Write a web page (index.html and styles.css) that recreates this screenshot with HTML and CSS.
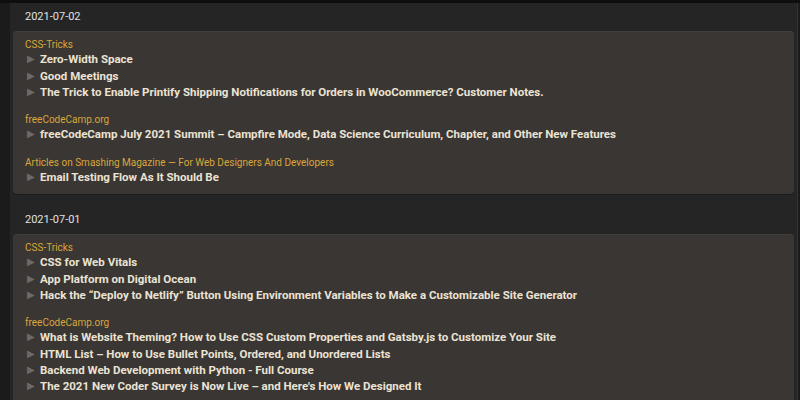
FILE: index.html
```html
<!DOCTYPE html>
<html>
<head>
<meta charset="utf-8">
<link rel="stylesheet" href="styles.css">
</head>
<body>
<div class="page">
  <section class="day">
    <div class="date">2021-07-02</div>
    <div class="card">
      <div class="group">
        <div class="source">CSS-Tricks</div>
        <ul class="items">
          <li><span class="tri">&#9654;</span><span class="title">Zero-Width Space</span></li>
          <li><span class="tri">&#9654;</span><span class="title">Good Meetings</span></li>
          <li><span class="tri">&#9654;</span><span class="title">The Trick to Enable Printify Shipping Notifications for Orders in WooCommerce? Customer Notes.</span></li>
        </ul>
      </div>
      <div class="group">
        <div class="source">freeCodeCamp.org</div>
        <ul class="items">
          <li><span class="tri">&#9654;</span><span class="title">freeCodeCamp July 2021 Summit – Campfire Mode, Data Science Curriculum, Chapter, and Other New Features</span></li>
        </ul>
      </div>
      <div class="group">
        <div class="source">Articles on Smashing Magazine — For Web Designers And Developers</div>
        <ul class="items">
          <li><span class="tri">&#9654;</span><span class="title">Email Testing Flow As It Should Be</span></li>
        </ul>
      </div>
    </div>
  </section>
  <section class="day">
    <div class="date">2021-07-01</div>
    <div class="card">
      <div class="group">
        <div class="source">CSS-Tricks</div>
        <ul class="items">
          <li><span class="tri">&#9654;</span><span class="title">CSS for Web Vitals</span></li>
          <li><span class="tri">&#9654;</span><span class="title">App Platform on Digital Ocean</span></li>
          <li><span class="tri">&#9654;</span><span class="title">Hack the “Deploy to Netlify” Button Using Environment Variables to Make a Customizable Site Generator</span></li>
        </ul>
      </div>
      <div class="group">
        <div class="source">freeCodeCamp.org</div>
        <ul class="items">
          <li><span class="tri">&#9654;</span><span class="title">What is Website Theming? How to Use CSS Custom Properties and Gatsby.js to Customize Your Site</span></li>
          <li><span class="tri">&#9654;</span><span class="title">HTML List – How to Use Bullet Points, Ordered, and Unordered Lists</span></li>
          <li><span class="tri">&#9654;</span><span class="title">Backend Web Development with Python - Full Course</span></li>
          <li><span class="tri">&#9654;</span><span class="title">The 2021 New Coder Survey is Now Live – and Here's How We Designed It</span></li>
        </ul>
      </div>
    </div>
  </section>
</div>
</body>
</html>
```
FILE: styles.css
```css
html, body {
  margin: 0;
  padding: 0;
  height: 100%;
  overflow: hidden;
}
body {
  background: #1b1b1b;
  border-top: 3px solid #0e0e0e;
  box-sizing: border-box;
  font-family: Roboto, "Liberation Sans", sans-serif;
}
.page {
  margin: 0 2px 0 10px;
  padding: 0 3px;
  background: #252525;
  min-height: 100%;
  border-right: 1px solid #333;
}
.day {
  margin-bottom: 12px;
}
.date {
  height: 28px;
  line-height: 28px;
  font-size: 11px;
  color: #e0e0e0;
  padding-left: 12px;
}
.card {
  background: #3a3633;
  border-radius: 4px;
  padding: 7px 12px 9px;
  box-shadow: 0 1px 0 #1c1c1c;
  border-top: 1px solid #423e3a;
}
.group + .group {
  margin-top: 14px;
}
.source {
  font-size: 10px;
  line-height: 12px;
  color: #d9a63c;
}
.items {
  list-style: none;
  margin: 0;
  padding: 0;
}
.items li {
  display: flex;
  align-items: center;
  height: 16.4px;
}
.tri {
  width: 15px;
  flex: none;
  font-size: 10px;
  line-height: 10px;
  color: #6c6a68;
  padding-left: 2px;
  box-sizing: border-box;
}
.title {
  font-size: 11.5px;
  font-weight: 700;
  color: #ebe3d3;
  white-space: nowrap;
}
```
